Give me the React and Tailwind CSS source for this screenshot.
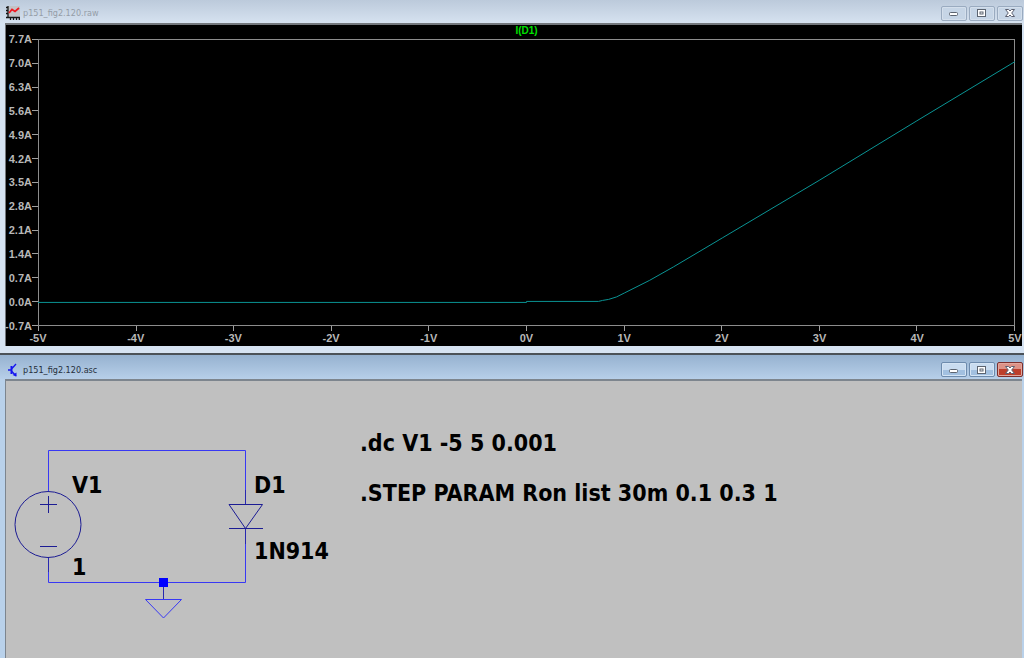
import { useId } from 'react';

const yLabels = ['7.7A', '7.0A', '6.3A', '5.6A', '4.9A', '4.2A', '3.5A', '2.8A', '2.1A', '1.4A', '0.7A', '0.0A', '-0.7A'];
const xLabels = ['-5V', '-4V', '-3V', '-2V', '-1V', '0V', '1V', '2V', '3V', '4V', '5V'];

// Diode current, in plot units (976 x 286)
const trace =
  '0,262.5 488,262.5 488,261.5 560,261.5 564,260.5 570,259.5 578,257 586,253 611,240.5 635,227 684,198 781,140.5 878,81.5 976,22.5';

const labels = [
  { text: 'V1', place: 'left-[66px] top-[90px]' },
  { text: '1', place: 'left-[66px] top-[172px]' },
  { text: 'D1', place: 'left-[248px] top-[90px]' },
  { text: '1N914', place: 'left-[248px] top-[156px]' },
  { text: '.dc V1 -5 5 0.001', place: 'left-[354px] top-[48px]' },
  { text: '.STEP PARAM Ron list 30m 0.1 0.3 1', place: 'left-[354px] top-[98px]' },
];

function PlotIcon() {
  return (
    <svg className="w-[14px] h-[14px] shrink-0" viewBox="0 0 14 14" aria-hidden="true">
      <rect x="2" y="0" width="12" height="11" fill="#c3c3c6" />
      <path d="M2 0v12M0 11.5h14M0 1.5h2M0 4.5h2M0 7.5h2M4.500 12v2M7.500 12v2M10.500 12v2M13.300 12v2" stroke="#161616" strokeWidth="1.3" fill="none" />
      <path d="M3 7L6 3.500L9 5.500L13 2" stroke="#f01820" strokeWidth="1.7" fill="none" />
    </svg>
  );
}

function TransistorIcon() {
  return (
    <svg className="w-[14px] h-[14px] shrink-0" viewBox="0 0 14 14" aria-hidden="true">
      <path d="M2 7h3M10 1L6 5.500M6 8.500L10 13" stroke="#1414f0" strokeWidth="1.3" fill="none" />
      <path d="M5.500 3v8" stroke="#1414f0" strokeWidth="2" />
      <path d="M6.500 12L10.500 13.500V9.500z" fill="#1414f0" />
    </svg>
  );
}

function Glyph({ kind }) {
  return (
    <svg className="w-[12px] h-[10px]" viewBox="0 0 12 10" aria-hidden="true">
      {kind === 'minimize' && <rect x="1.5" y="4.5" width="8" height="3" rx="1" fill="#fff" stroke="#5c6470" />}
      {kind === 'maximize' && (
        <>
          <rect x="1.5" y="1.5" width="8" height="7" fill="#fff" stroke="#5c6470" />
          <rect x="4" y="4" width="3" height="2" fill="#fff" stroke="#5c6470" />
        </>
      )}
      {kind === 'close' && (
        <path
          d="M1.5 1.5h3l1.5 1.5l1.5-1.5h3L7.7 5l2.8 3.5h-3L6 7L4.500 8.500h-3L4.300 5z"
          fill="#fff"
          stroke="#5c6070"
        />
      )}
    </svg>
  );
}

function WindowButtons({ active }) {
  const base = 'h-[15px] w-[26px] flex items-center justify-center rounded-[2px] border';
  const plain = active
    ? 'border-[#6d8bad] bg-linear-to-b from-[#c9dcf0] from-50% to-[#a2c0e0] to-50% shadow-[inset_0_0_0_1px_#d4e4f4]'
    : 'border-[#9aabc0] bg-[#c6d5e6] shadow-[inset_0_0_0_1px_#d4dfec]';
  const close = active
    ? 'border-[#7c2f2d] bg-linear-to-b from-[#dd9287] from-45% to-[#bd3f2c] to-50% shadow-[inset_0_0_0_1px_#e2a79d]'
    : plain;

  return (
    <div className="flex gap-[2px]">
      <button type="button" aria-label="Minimize" className={`${base} ${plain}`}><Glyph kind="minimize" /></button>
      <button type="button" aria-label="Maximize" className={`${base} ${plain}`}><Glyph kind="maximize" /></button>
      <button type="button" aria-label="Close" className={`${base} ${close}`}><Glyph kind="close" /></button>
    </div>
  );
}

function PlotWindow() {
  const titleId = useId();

  return (
    <section aria-labelledby={titleId} className="bg-[#d6e3f2] pl-[5px] pr-[2px] pb-[7px]">
      <header className="-ml-[5px] -mr-[2px] h-[23px] pt-[3px] pl-[6px] pr-px flex items-center gap-[3px] bg-linear-to-b from-[#bccadb] to-[#d6e2f0]">
        <PlotIcon />
        <h2 id={titleId} className="flex-1 text-[9px] leading-4 text-[#959da7] font-['DejaVu_Sans_Condensed','Noto_Sans',sans-serif]">p151_fig2.120.raw</h2>
        <WindowButtons active={false} />
      </header>

      <div className="bg-black border-t-2 border-l border-[#73777c] text-[#b8b8b8] font-['Liberation_Sans',sans-serif] font-bold text-[11px]">
        <div className="h-[14px] pl-[32px] pr-[7px] text-center text-[10px] leading-3 text-[#00e000]">I(D1)</div>
        <div className="flex pr-[7px]">
          <div className="w-[26px] -my-2 flex flex-col items-end justify-between leading-4 whitespace-nowrap">
            {yLabels.map((label) => (
              <span key={label}>{label}</span>
            ))}
          </div>
          <div className="w-[6px] flex flex-col justify-between">
            {yLabels.map((label) => (
              <span key={label} className="h-px bg-[#a0a0a0]" />
            ))}
          </div>
          <div className="flex-1 h-[287px] border border-[#8c8c8c]">
            <svg className="-m-px w-[calc(100%+2px)] h-[287px] block" viewBox="0 0 976 286" preserveAspectRatio="none" role="img" aria-label="I(D1)">
              <polyline points={trace} fill="none" stroke="#0a9494" strokeWidth="1" vectorEffect="non-scaling-stroke" />
            </svg>
          </div>
        </div>
        <div className="pl-[32px] pr-[7px]">
          <div className="h-[5px] flex justify-between">
            {xLabels.map((label) => (
              <span key={label} className="w-px bg-[#a0a0a0]" />
            ))}
          </div>
          <div className="-mx-2 h-[15px] flex justify-between leading-[14px]">
            {xLabels.map((label) => (
              <span key={label} className="w-4 flex justify-center whitespace-nowrap">{label}</span>
            ))}
          </div>
        </div>
      </div>
    </section>
  );
}

function Circuit() {
  return (
    <svg className="block w-[300px] h-[260px]" viewBox="6 381 300 260" fill="none" role="img" aria-label="V1 D1 1N914">
      <path d="M48.500 491V450.500H245.500V490M245.500 544V582.500H48.500V572" stroke="#3838f4" />
      <path d="M48.500 572V557M163.500 582V599M245.500 490V504M245.500 529V544" stroke="#2828b0" />
      <circle cx="48" cy="524.500" r="33" stroke="#1c1c94" />
      <path d="M40 504.500h17M48.500 496v17M40 546.500h17" stroke="#1c1c94" />
      <path d="M229 504.500h33.500L245.500 528.500zM229 528.500h34" stroke="#1c1c94" />
      <path d="M145.500 599.500h36L163.500 618z" stroke="#3838f4" />
      <rect x="159" y="578" width="9" height="9" fill="#0000ff" />
    </svg>
  );
}

function SchematicWindow() {
  const titleId = useId();

  return (
    <section aria-labelledby={titleId} className="flex-1 flex flex-col bg-[#b9d1ea] pl-[5px] pr-[2px]">
      <header className="-ml-[5px] -mr-[2px] h-[24px] pt-[5px] pl-[6px] pr-px flex items-center gap-[3px] bg-linear-to-b from-[#96b2d0] to-[#b7cfe9]">
        <TransistorIcon />
        <h2 id={titleId} className="flex-1 text-[9px] leading-4 text-[#26303c] font-['DejaVu_Sans_Condensed','Noto_Sans',sans-serif]">p151_fig2.120.asc</h2>
        <WindowButtons active />
      </header>

      <div className="relative flex-1 bg-[#c0c0c0] border-t-2 border-l border-[#7d858e] overflow-hidden">
        <Circuit />
        {labels.map((label) => (
          <span
            key={label.text}
            className={`absolute ${label.place} text-[23px] leading-7 font-bold text-black whitespace-nowrap font-['DejaVu_Sans_Condensed','Noto_Sans',sans-serif]`}
          >
            {label.text}
          </span>
        ))}
      </div>
    </section>
  );
}

function App() {
  return (
    <main className="min-h-screen flex flex-col">
      <PlotWindow />
      <div className="h-[2px] bg-[#4b5258]" />
      <SchematicWindow />
    </main>
  );
}

export default App;
